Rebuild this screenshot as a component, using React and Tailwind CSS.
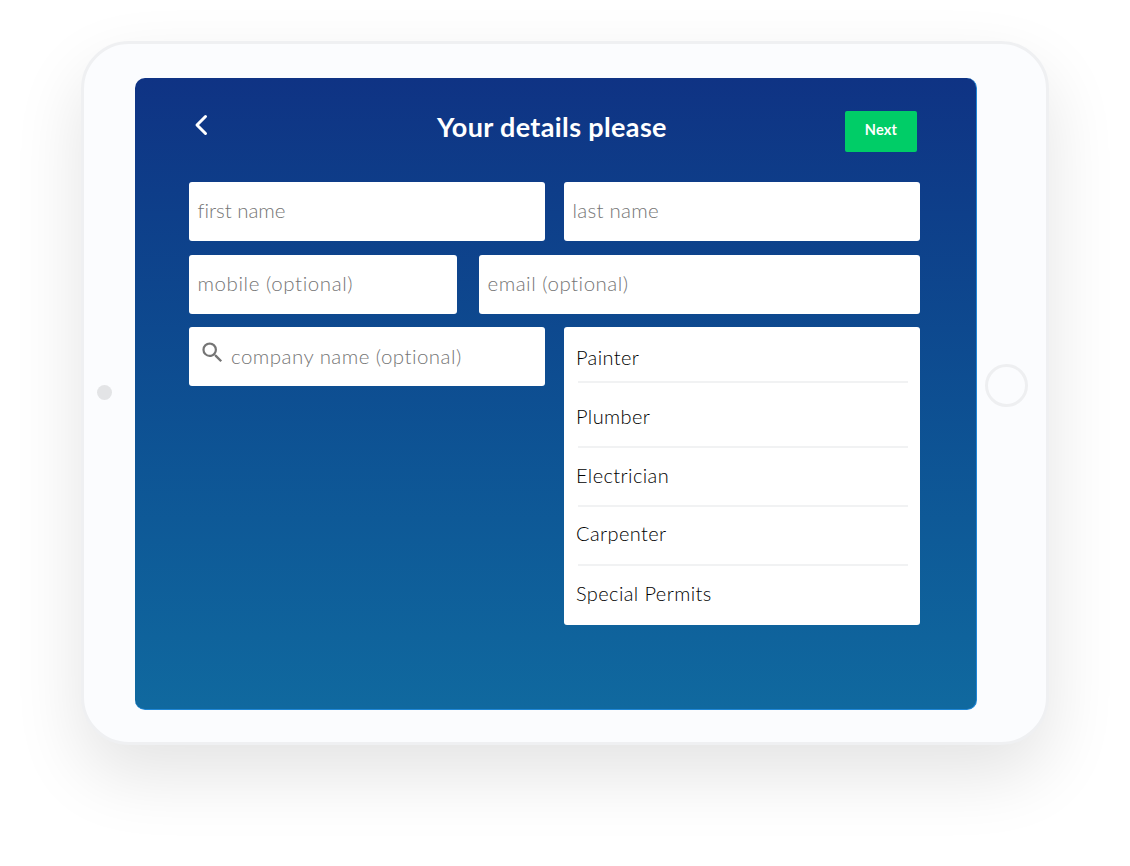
import React from "react";
import { MdSearch } from "react-icons/md";

const font = "font-['Lato','Noto_Sans',sans-serif]";

function Field({ label, className = "" }) {
  return (
    <div className={`h-[59px] bg-white rounded-[3px] flex items-center pl-[8.5px] pb-[2px] text-[20.5px] font-light text-[#757575] ${className}`}>
      {label}
    </div>
  );
}

const trades = [
  { name: "Painter", h: "h-[56px]", pad: "pt-[6px]" },
  { name: "Plumber", h: "h-[65px]", pad: "pt-[3px]" },
  { name: "Electrician", h: "h-[59px]", pad: "pb-[3px]" },
  { name: "Carpenter", h: "h-[59px]", pad: "pb-[5px]" },
  { name: "Special Permits", h: "h-[59px]", pad: "pb-[6px]" },
];

export default function App() {
  return (
    <div className={`w-[1130px] h-[866px] bg-white overflow-hidden pl-[81px] pt-[41px] ${font}`}>
      <div className="relative w-[968px] h-[704px] bg-[#fbfcfe] border-[3px] border-[#eff0f2] rounded-[48px] pl-[51px] pt-[34px] shadow-[0_30px_70px_rgba(0,0,0,0.11)]">
        <div className="absolute left-[13px] top-[341px] w-[15px] h-[15px] rounded-full bg-[#e3e4e6]" />
        <div className="absolute left-[901px] top-[320px] w-[43px] h-[43px] rounded-full border-[3px] border-[#eeeff1] bg-[#fbfcfe]" />

        <div className="w-[842px] h-[632px] rounded-[10px] overflow-hidden bg-gradient-to-b from-[#0f3384] to-[#10699f] border-r border-b border-[#1f86d6] pl-[54px] pt-[33px]">
          <div className="relative w-[728px] h-[41px] flex items-start">
            <svg className="absolute left-[5px] top-[3px]" width="14" height="22" viewBox="0 0 14 22" fill="none">
              <path d="M11.5 2.5L3 11l8.5 8.5" stroke="#fff" strokeWidth="3" strokeLinecap="round" strokeLinejoin="round" />
            </svg>
            <h1 className="absolute left-[248px] top-[-1px] text-[27px] leading-[34px] font-bold text-white tracking-[0.36px] whitespace-nowrap">
              Your details please
            </h1>
            <button className="absolute left-[656px] top-0 w-[72px] h-[41px] bg-[#00cd67] rounded-[2px] text-white text-[14.5px] font-bold tracking-[0.2px] pb-[3px]">
              Next
            </button>
          </div>

          <div className="mt-[30px] w-[731px] flex flex-col gap-[13.5px]">
            <div className="flex gap-[19px]">
              <Field label="first name" className="w-[356px] tracking-[-0.05px]" />
              <Field label="last name" className="w-[356px] tracking-[0.25px]" />
            </div>
            <div className="flex gap-[22px]">
              <Field label="mobile (optional)" className="w-[268px] tracking-[0.57px]" />
              <Field label="email (optional)" className="w-[441px] tracking-[0.5px]" />
            </div>
            <div className="flex gap-[19px] items-start">
              <div className="w-[356px] h-[59px] bg-white rounded-[3px] flex items-center pl-[10px] pb-[1px] text-[20.5px] font-light tracking-[0.45px] text-[#757575]">
                <MdSearch className="w-[27px] h-[27px] text-[#757575] self-start mt-[12px] shrink-0" />
                <span className="ml-[5px]">company name (optional)</span>
              </div>
              <div className="w-[356px] bg-white rounded-[3px] pl-[14px] pr-[12px]">
                {trades.map((t, i) => (
                  <div
                    key={t.name}
                    className={`${t.h} ${t.pad} flex items-center text-[20px] font-light tracking-[0.4px] text-black ${i < 4 ? "border-b-2 border-[#f1f2f3]" : ""}`}
                  >
                    <span className="-ml-[2px]">{t.name}</span>
                  </div>
                ))}
              </div>
            </div>
          </div>
        </div>
      </div>
    </div>
  );
}
